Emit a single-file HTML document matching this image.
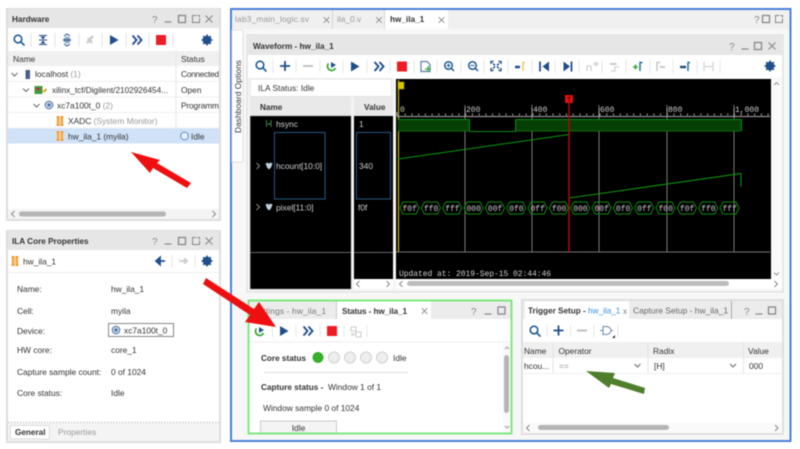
<!DOCTYPE html>
<html><head><meta charset="utf-8">
<style>
html,body{margin:0;padding:0;background:#fff;width:800px;height:449px;overflow:hidden}
svg{display:block;filter:blur(.5px)}
text{font-family:"Liberation Sans",sans-serif;font-size:8.4px;fill:#333}
.b{font-weight:bold;font-size:8.200px}
.g{fill:#999}
.m{font-family:"Liberation Mono",monospace;fill:#ccc;font-size:8px}
.w{fill:#ccc}
.h{font-size:10px;fill:#888}
</style></head><body>
<svg width="800" height="449" viewBox="0 0 800 449" xmlns="http://www.w3.org/2000/svg">
<defs>
<g id="search" fill="none" stroke="#1f5a96" stroke-width="1.600"><circle cx="-1" cy="-1" r="3.800"/><path d="M2 2l3.500 3.500"/></g>
<path id="play" d="M-4-5L4.500 0-4 5z" fill="#1f4e8c"/>
<path id="ff" d="M-4.500-4.500L-.5 0-4.500 4.500M.5-4.500L4.500 0 .5 4.500" fill="none" stroke="#1f4e8c" stroke-width="1.900"/>
<rect id="stop" x="-5" y="-5" width="10" height="10" fill="#ee1c25"/>
<g id="gear"><circle r="3.200" fill="none" stroke="#1f4e8c" stroke-width="2.400"/><path d="M0-5.500V5.500M-5.500 0H5.500M-3.900-3.900L3.900 3.900M-3.900 3.900L3.900-3.900" stroke="#1f4e8c" stroke-width="1.500"/></g>
<path id="plus" d="M-5 0H5M0-5V5" stroke="#1f4e8c" stroke-width="1.800" fill="none"/>
<path id="minus" d="M-5 0H5" stroke="#bbb" stroke-width="1.800" fill="none"/>
<g id="refresh"><path d="M3.500 2A4.200 4.200 0 1 1-3.500-2.500" fill="none" stroke="#3aa63a" stroke-width="1.700"/><path d="M-1-4L4-1-1 2z" fill="#1f4e8c"/></g>
<g id="ila"><rect x="-3.500" y="-5" width="7" height="10" fill="#f8c98a"/><path d="M-2-5V5M2-5V5M-3.500-4H-1M1-4H3.500M-3.500 4H-1M1 4H3.500" stroke="#e69020" stroke-width="1" fill="none"/></g>
<g id="win" fill="none" stroke="#888" stroke-width="1"><rect x="-3.500" y="-3.500" width="7" height="7" stroke-width="1.300"/></g>
<g id="rest" fill="none" stroke="#888" stroke-width="1"><path d="M3.500-.5V3.500H-3.500V-3.500H.5M1.500-3.500H3.500V-1.500"/></g>
<path id="x" d="M-3.500-3.500L3.500 3.500M-3.500 3.500L3.500-3.500" stroke="#888" stroke-width="1.100" fill="none"/>
<path id="mn" d="M-3.500 3H3.500" stroke="#888" stroke-width="1.200"/>
<path id="chev" d="M-3-1.500L0 1.500 3-1.500" fill="none" stroke="#666" stroke-width="1"/>
<path id="chevr" d="M-1.500-3L1.500 0-1.500 3" fill="none" stroke="#888" stroke-width="1"/>
<g id="cpu"><circle r="3.800" fill="#cfd8ea" stroke="#4a6fa5" stroke-width="1"/><circle r="1.600" fill="#4a6fa5"/></g>
<path id="hex" d="M0 6L3 0 16 0 19 6 16 12 3 12z" fill="none" stroke="#0c8a0c" stroke-width="1"/>
<path id="sig" d="M-3.500-2.500L-1-3.500 0-2 1-3.500 3.500-2.500 2 1.500 0 3.500-2 1.500z" fill="#bcd0dd"/>
</defs>

<!-- Hardware panel -->
<rect x="7" y="9" width="213" height="211" fill="#fff" stroke="#dedede" stroke-width="2"/>
<rect x="8" y="9" width="211" height="19" fill="#e6e6e6"/>
<text x="12" y="22" class="b">Hardware</text>
<text x="152" y="23" class="h">?</text><use href="#mn" x="168" y="19"/><use href="#win" x="182" y="19"/><use href="#rest" x="196" y="19"/><use href="#x" x="209" y="19"/>
<use href="#search" x="19" y="40"/><use href="#play" x="114" y="40"/><use href="#ff" x="137" y="40"/><use href="#stop" x="161" y="40"/><use href="#gear" x="207" y="40"/>
<path d="M39 35.500H47M39 44.500H47M39 40H47" stroke="#1f4e8c"/><path d="M43 39.500L40.500 36.500H45.500zM43 40.500L40.500 43.500H45.500z" fill="#1f4e8c"/>
<ellipse cx="67" cy="40" rx="3.500" ry="3.500" fill="#8aa6c8"/><path d="M63 40H71M64 36L67 34 70 36M64 44L67 46 70 44" stroke="#1f4e8c" fill="none"/>
<path d="M87 43L93 36M88 38l4 5" stroke="#ccc" stroke-width="2.500"/>
<path d="M31 33V47M55 33V47M79 33V47M102 33V47M126 33V47M149 33V47M173 33V47" stroke="#e3e3e3"/>
<rect x="8" y="51" width="211" height="15" fill="#f0f0f0"/>
<path d="M176 51V143" stroke="#e6e6e6"/>
<text x="13" y="62">Name</text><text x="181" y="62">Status</text>
<path d="M8 81.500H219M8 97H219M8 112.500H219M8 128H219" stroke="#efefef"/>
<rect x="8" y="128.500" width="211" height="15" fill="#cfe2f8"/>
<use href="#chev" x="14.500" y="74.500"/><rect x="25.500" y="70" width="4.500" height="9" fill="#46608a"/>
<text x="35" y="77">localhost <tspan class="g">(1)</tspan></text><text x="181" y="77" textLength="38">Connected</text>
<use href="#chev" x="26" y="90"/><rect x="34.500" y="86" width="8" height="8" fill="#3f9a3f"/><rect x="36" y="88" width="4" height="2" fill="#c33"/><path d="M43.500 92l3-3" stroke="#e0a020" stroke-width="2"/>
<text x="52" y="93" textLength="116" lengthAdjust="spacingAndGlyphs">xilinx_tcf/Digilent/2102926454...</text><text x="181" y="93">Open</text>
<use href="#chev" x="36.500" y="105.500"/><use href="#cpu" x="49" y="105"/>
<text x="57" y="108.500">xc7a100t_0 <tspan class="g">(2)</tspan></text><text x="181" y="108.500" textLength="38">Programm</text>
<use href="#ila" x="60" y="121"/><text x="68" y="124">XADC <tspan class="g">(System Monitor)</tspan></text>
<use href="#ila" x="60" y="136"/><text x="68" y="139.500">hw_ila_1 (myila)</text>
<circle cx="184.500" cy="136" r="3.800" fill="#e8f2fc" stroke="#5a8fc0"/><text x="191" y="139.500">Idle</text>
<rect x="8" y="209" width="211" height="10" fill="#f4f4f4"/><rect x="19" y="211.500" width="147" height="5" rx="2.500" fill="#b5b5b5"/>
<use href="#chevr" transform="translate(13 214) scale(-1 1)"/><use href="#chevr" x="214" y="214"/>

<!-- ILA Core Properties -->
<rect x="7" y="231" width="213" height="211" fill="#fff" stroke="#dedede" stroke-width="2"/>
<rect x="8" y="231" width="211" height="19" fill="#e6e6e6"/>
<text x="12" y="244" class="b">ILA Core Properties</text>
<text x="152" y="245" class="h">?</text><use href="#mn" x="168" y="241"/><use href="#win" x="182" y="241"/><use href="#rest" x="196" y="241"/><use href="#x" x="209" y="241"/>
<path d="M8 272.500H219" stroke="#eee"/>
<use href="#ila" x="15" y="261"/><text x="23" y="264.500">hw_ila_1</text>
<path d="M156 261H165M160 257.500L156 261 160 264.500z" stroke="#1f4e8c" stroke-width="1.800" fill="#1f4e8c"/>
<path d="M179 261H187M184 258.500L187 261 184 263.500" stroke="#ccc" stroke-width="1.800" fill="none"/>
<use href="#gear" x="207" y="261"/><path d="M172 255V267M195 255V267" stroke="#e3e3e3"/>
<text x="17" y="292">Name:</text><text x="111" y="292">hw_ila_1</text>
<text x="17" y="314">Cell:</text><text x="111" y="314">myila</text>
<text x="17" y="334">Device:</text>
<rect x="108.500" y="323.500" width="65" height="13" fill="#fff" stroke="#888"/><use href="#cpu" x="116" y="330"/><text x="124" y="333.500">xc7a100t_0</text>
<text x="17" y="353">HW core:</text><text x="111" y="353">core_1</text>
<text x="17" y="375">Capture sample count:</text><text x="111" y="375">0 of 1024</text>
<text x="17" y="396">Core status:</text><text x="111" y="396">Idle</text>
<path d="M8 422.500H219" stroke="#bbb" stroke-dasharray="1.500 1.500"/>
<rect x="8" y="423" width="211" height="18" fill="#f4f4f4"/>
<rect x="10.500" y="425.500" width="39" height="13.500" fill="#fff" stroke="#ddd"/>
<text x="15" y="435" class="b">General</text><text x="58" y="435" class="g">Properties</text>

<!-- Main frame -->
<rect x="231" y="9" width="559.500" height="432" fill="#f7f7f7" stroke="#4a80d8" stroke-width="2"/>
<rect x="232" y="10" width="557" height="19" fill="#f0f0f0"/>
<rect x="385" y="10" width="63" height="19" fill="#fff"/>
<path d="M332.500 10V29M384.500 10V29" stroke="#d4d4d4"/>
<text x="235" y="22" class="g" textLength="74">lab3_main_logic.sv</text><use href="#x" transform="translate(326.500 20) scale(.8)"/>
<text x="337" y="22" class="g">ila_0.v</text><use href="#x" transform="translate(379 20) scale(.8)"/>
<text x="390" y="22" class="b">hw_ila_1</text><use href="#x" transform="translate(441.500 20) scale(.8)"/>
<text x="754" y="23" class="h">?</text><use href="#win" x="766" y="19"/><use href="#rest" x="779" y="19"/>

<!-- Dashboard tab -->
<path d="M232 30H241Q243 30 243 32V160Q243 162 241 162H232z" fill="#fff" stroke="#e0e0e0"/>
<text transform="translate(241 133) rotate(-90)" textLength="73">Dashboard Options</text>

<!-- Waveform panel -->
<rect x="247" y="35" width="536" height="257" fill="#f4f4f4" stroke="#dcdcdc"/>
<rect x="248" y="36" width="534" height="19" fill="#e6e6e6"/>
<text x="253" y="49" class="b">Waveform - hw_ila_1</text>
<text x="729" y="50" class="h">?</text><use href="#mn" x="745" y="46"/><use href="#win" x="758" y="46"/><use href="#x" x="772" y="46"/>
<rect x="248" y="55" width="534" height="23" fill="#fff"/>
<use href="#search" x="261" y="66"/><use href="#plus" x="285" y="66"/><use href="#minus" x="308" y="66"/><use href="#refresh" x="332" y="66"/><use href="#play" x="355" y="66.500"/><use href="#ff" x="379" y="66.500"/><use href="#stop" x="402" y="66.500"/>
<path d="M421 61.500H427L430 64.500V71.500H421z" fill="none" stroke="#5a7ea8" stroke-width="1.200"/><path d="M425 69H431M428 66V72" stroke="#3aa63a" stroke-width="1.300"/>
<g fill="none" stroke="#1f5a96" stroke-width="1.500"><circle cx="448.500" cy="65.500" r="3.800"/><path d="M451.500 68.500L454 71"/><circle cx="472.500" cy="65.500" r="3.800"/><path d="M475.500 68.500L478 71"/></g>
<path d="M446.500 65.500H450.500M448.500 63.500V67.500M470.500 65.500H474.500" stroke="#1f5a96"/>
<path d="M491 64V61.500H493.500M498.500 61.500H501V64M491 68V70.500H493.500M498.500 70.500H501V68M493 63.500L495 65.500M499 63.500L497 65.500M493 68.500L495 66.500M499 68.500L497 66.500" stroke="#1f4e8c" stroke-width="1.400" fill="none"/>
<path d="M515 67H520" stroke="#1f4e8c" stroke-width="2.500"/><path d="M523 71V62.500H525" stroke="#e8c860" stroke-width="1.500" fill="none"/>
<path d="M540 61.500V71.500" stroke="#1f4e8c" stroke-width="1.800"/><path d="M549 61.500V71.500L542.500 66.500z" fill="#1f4e8c"/>
<path d="M571.500 61.500V71.500" stroke="#1f4e8c" stroke-width="1.800"/><path d="M563.500 61.500V71.500L570 66.500z" fill="#1f4e8c"/>
<path d="M587 71V66H591V71M593 64H598M595 62L598 64 595 66" stroke="#c8c8c8" fill="none"/>
<path d="M610 64H617M611 71H615V67H619" stroke="#c8c8c8" fill="none"/><rect x="610" y="63" width="6" height="2" fill="#c8c8c8"/>
<path d="M633 67H638M635.500 64.500V69.500" stroke="#3aa63a" stroke-width="1.500"/><path d="M640 71V62.500H642.500" stroke="#1f6fa0" stroke-width="1.500" fill="none"/>
<path d="M657 71V62.500H660" stroke="#c8c8c8" stroke-width="1.500" fill="none"/><path d="M660 67H665" stroke="#c8c8c8" stroke-width="2"/>
<path d="M680 67H686" stroke="#1f4e8c" stroke-width="2.500"/><path d="M688 71V62.500H690" stroke="#1f6fa0" stroke-width="1.500" fill="none"/>
<path d="M704 62V71M713 62V71M705 66.500H712" stroke="#cfcfcf" stroke-width="1.200" fill="none"/>
<use href="#gear" x="770" y="66"/>
<path d="M273 60V73M296 60V73M320 60V73M343 60V73M367 60V73M390 60V73M414 60V73M437 60V73M461 60V73M484 60V73M508 60V73M532 60V73M555 60V73M579 60V73M602 60V73M626 60V73M650 60V73M673 60V73M697 60V73M720 60V73" stroke="#e6e6e6"/>

<!-- Left of waveform -->
<rect x="250" y="79" width="141.500" height="17.500" fill="#fff" stroke="#e4e4e4"/>
<text x="258" y="91">ILA Status:  Idle</text>
<rect x="250" y="97" width="101" height="19" fill="#e9e9e9"/><rect x="354" y="97" width="39" height="19" fill="#e9e9e9"/>
<text x="260" y="110" class="b">Name</text><text x="364" y="110" class="b">Value</text>
<rect x="250" y="116" width="101" height="173" fill="#000"/>
<rect x="354" y="116" width="39" height="163" fill="#000"/>
<rect x="396" y="79" width="375" height="200" fill="#000"/>
<rect x="250.500" y="116" width="100.500" height="173" fill="none" stroke="#777" stroke-width=".5"/>
<path d="M250 252.500H351M354 252.500H393" stroke="#666"/>
<rect x="274.500" y="132.500" width="50.500" height="66.500" fill="none" stroke="#245a80"/>
<rect x="356.500" y="132.500" width="34" height="66.500" fill="none" stroke="#245a80"/>
<path d="M266.500 120V127M271 120V127" stroke="#2e9a2e"/><path d="M268 124h2" stroke="#9ad"/>
<text x="276" y="127" class="w">hsync</text><text x="359" y="127" class="w">1</text>
<use href="#chevr" x="258" y="166"/><use href="#sig" x="269" y="166"/><text x="276" y="169" class="w">hcount[10:0]</text><text x="359" y="169" class="w">340</text>
<use href="#chevr" x="258" y="207"/><use href="#sig" x="269" y="207"/><text x="276" y="210.500" class="w">pixel[11:0]</text><text x="358" y="210.500" class="w">f0f</text>
<rect x="354" y="279" width="39" height="10" fill="#fff"/><use href="#chevr" transform="translate(358 284) scale(-1 1)"/><use href="#chevr" x="388" y="284"/>

<!-- Waveform -->
<path d="M465 105V252M532 105V252M599 105V252M667 105V252M734 105V252" stroke="#7a7a7a" stroke-width="1"/>
<path d="M398.500 80V252" stroke="#c8b400" stroke-width="1.200"/>
<rect x="398" y="82" width="6" height="7" fill="#d8c800" stroke="#a89800" stroke-width=".5"/>
<path d="M397 116.500H770" stroke="#aaa"/>
<path d="M398 114.500H770" stroke="#aaa" stroke-width="2" stroke-dasharray="1 5.720"/>
<path d="M397 112V116M465 108V116M532 108V116M599 108V116M667 108V116M734 108V116" stroke="#aaa"/>
<text x="400" y="112" class="m">0</text><text x="466" y="112" class="m">200</text><text x="533" y="112" class="m">400</text><text x="600" y="112" class="m">600</text><text x="668" y="112" class="m">800</text><text x="735" y="112" class="m">1,000</text>
<rect x="398" y="119" width="72" height="12" fill="#063f06"/><rect x="516" y="119" width="226" height="12" fill="#063f06"/>
<path d="M398 119.500H469.500V131.500H515.500V119.500H741.500V131" fill="none" stroke="#0c8a0c" stroke-width="1"/>
<path d="M398 131H470M516 131H741" stroke="#0c6a0c"/>
<path d="M398 159L569 134.500M569 198L741 173.500V186.500" fill="none" stroke="#0d9a0d" stroke-width="1"/>
<path d="M396 252H770" stroke="#777"/>
<path d="M569 103V252" stroke="#b00808" stroke-width="1.500"/>
<rect x="565" y="95" width="8" height="8" fill="#e01010"/>
<text x="567" y="102" style="font-size:7px;fill:#400">T</text>
<g>
<use href="#hex" x="400" y="202"/><use href="#hex" x="421.400" y="202"/><use href="#hex" x="442.700" y="202"/><use href="#hex" x="464" y="202"/><use href="#hex" x="485.400" y="202"/><use href="#hex" x="506.700" y="202"/><use href="#hex" x="528" y="202"/><use href="#hex" x="549.400" y="202"/><use href="#hex" x="570.700" y="202"/><use href="#hex" x="592" y="202"/><use href="#hex" x="613.400" y="202"/><use href="#hex" x="634.700" y="202"/><use href="#hex" x="656" y="202"/><use href="#hex" x="677.400" y="202"/><use href="#hex" x="698.700" y="202"/><use href="#hex" x="720" y="202"/>
</g>
<g>
<text class="m" x="402.500" y="211">f0f</text><text class="m" x="423.900" y="211">ff0</text><text class="m" x="445.200" y="211">fff</text><text class="m" x="466.500" y="211">000</text><text class="m" x="487.900" y="211">00f</text><text class="m" x="509.200" y="211">0f0</text><text class="m" x="530.500" y="211">0ff</text><text class="m" x="551.900" y="211">f00</text><text class="m" x="573.200" y="211">000</text><text class="m" x="594.500" y="211">00f</text><text class="m" x="615.900" y="211">0f0</text><text class="m" x="637.200" y="211">0ff</text><text class="m" x="658.500" y="211">f00</text><text class="m" x="679.900" y="211">f0f</text><text class="m" x="701.200" y="211">ff0</text><text class="m" x="722.500" y="211">fff</text>
</g>
<text class="m" x="399" y="276" textLength="152">Updated at: 2019-Sep-15 02:44:46</text>
<!-- scrollbars -->
<rect x="771" y="79" width="11" height="200" fill="#fafafa"/>
<path d="M774 85L776.500 82.500 779 85M774 272.500L776.500 275 779 272.500" fill="none" stroke="#999"/>
<rect x="396" y="279" width="386" height="10" fill="#fff"/>
<rect x="407" y="281" width="322" height="5" rx="2.500" fill="#bdbdbd"/>
<use href="#chevr" transform="translate(401 284) scale(-1 1)"/><use href="#chevr" x="776" y="284"/>

<!-- Status panel -->
<rect x="249" y="301" width="262" height="132" fill="#fff"/>
<rect x="249" y="301" width="262" height="18" fill="#ececec"/>
<rect x="337" y="301" width="94" height="18" fill="#fff"/>
<path d="M336.500 301V319" stroke="#ccc"/>
<text x="253" y="314" style="fill:#777" textLength="73">Settings - hw_ila_1</text>
<text x="342" y="314" class="b" textLength="65">Status - hw_ila_1</text><use href="#x" transform="translate(424.500 311) scale(.8)"/>
<text x="471" y="315" class="h">?</text><use href="#mn" x="488" y="311"/><use href="#win" x="501.500" y="310.500"/>
<use href="#refresh" x="260" y="331"/><use href="#play" x="284" y="331"/><use href="#ff" x="308" y="331"/><use href="#stop" x="332" y="331"/>
<rect x="351" y="327" width="5" height="4" fill="none" stroke="#ccc"/><rect x="356" y="332" width="5" height="5" fill="none" stroke="#ccc"/><rect x="351" y="333" width="4" height="3" fill="#ddd"/>
<path d="M272.500 325V337M296 325V337M320 325V337M344 325V337M367 325V337" stroke="#e6e6e6"/>
<path d="M249 342H511" stroke="#eee"/>
<text x="261" y="361" class="b">Core status</text>
<circle cx="318" cy="357.500" r="5.500" fill="#36b02a"/>
<g fill="#eee" stroke="#d0d0d0"><circle cx="334" cy="357.500" r="5.500"/><circle cx="350" cy="357.500" r="5.500"/><circle cx="366" cy="357.500" r="5.500"/><circle cx="382" cy="357.500" r="5.500"/></g>
<text x="393" y="361">Idle</text>
<path d="M264 372.500H408" stroke="#ddd" stroke-width="1"/>
<text x="261" y="390" class="b">Capture status -</text><text x="328" y="390">Window 1 of 1</text>
<text x="263" y="411">Window sample 0 of 1024</text>
<rect x="260.500" y="421" width="76" height="12" fill="#f4f4f4" stroke="#ccc"/>
<text x="298.500" y="431" text-anchor="middle">Idle</text>
<rect x="503" y="343" width="8" height="90" fill="#fafafa"/>
<rect x="504" y="355" width="5" height="58" rx="2.500" fill="#b5b5b5"/>
<path d="M505 349L507 347 509 349M505 426L507 428 509 426" fill="none" stroke="#999"/>
<rect x="248.500" y="300.500" width="263" height="133" fill="none" stroke="#7ee87e" stroke-width="2"/>

<!-- Trigger panel -->
<rect x="522" y="300" width="261" height="134" fill="#fff" stroke="#dedede" stroke-width="2"/>
<rect x="523" y="301" width="259" height="18" fill="#ececec"/>
<rect x="525" y="301" width="104" height="18" fill="#fff"/>
<path d="M731.500 301V319" stroke="#aaa"/>
<text x="528" y="313.500" class="b">Trigger Setup - <tspan style="font-weight:normal;fill:#3a8fe0">hw_ila_1</tspan></text><text x="623" y="314" style="fill:#777;font-size:8px">x</text>
<text x="633" y="313.500" style="fill:#666" textLength="95">Capture Setup - hw_ila_1</text>
<text x="744" y="315" class="h">?</text><use href="#mn" x="759" y="311"/><use href="#win" x="772" y="310.500"/>
<use href="#search" x="535" y="331"/><use href="#plus" x="558.500" y="330.500"/><use href="#minus" x="582" y="330.500"/>
<path d="M603 326.500H606C609.500 326.500 611 329 611 330.500S609.500 334.500 606 334.500H603zM600 330.500H603M611 330.500H613" fill="none" stroke="#6a86a8"/><path d="M612 338L615 335V338z" fill="#333"/>
<path d="M547 325V337M570.500 325V337M594 325V337M618 325V337" stroke="#e6e6e6"/>
<rect x="523" y="342" width="259" height="16" fill="#f0f0f0"/>
<path d="M553 342V373M648 342V373M743.500 342V373" stroke="#e4e4e4"/><path d="M523 373.500H782" stroke="#eee"/>
<text x="524" y="354">Name</text><text x="558.500" y="354">Operator</text><text x="653" y="354">Radix</text><text x="748" y="354">Value</text>
<text x="524" y="369">hcou...</text><text x="559" y="369" class="g">==</text><text x="654" y="369">[H]</text><text x="749" y="369">000</text>
<use href="#chev" x="637.500" y="365.500"/><use href="#chev" x="733" y="365.500"/>
<rect x="523" y="423" width="259" height="10" fill="#fafafa"/>
<rect x="538" y="425" width="131" height="5" rx="2.500" fill="#b5b5b5"/>
<use href="#chevr" transform="translate(528 428) scale(-1 1)"/><use href="#chevr" x="776.500" y="428"/>

<!-- Arrows -->
<path d="M131 152L160 160 157 163 191 183 187 188 153 168 150 173z" fill="#ee1010"/>
<path d="M276 327L245 322 250 315 203 284 206 278 254 309 259 302z" fill="#ee1010"/>
<path d="M586 371L615 373 613 378 645 388 644 394 611 384 609 388z" fill="#4f7f2c"/>
</svg>
</body></html>
